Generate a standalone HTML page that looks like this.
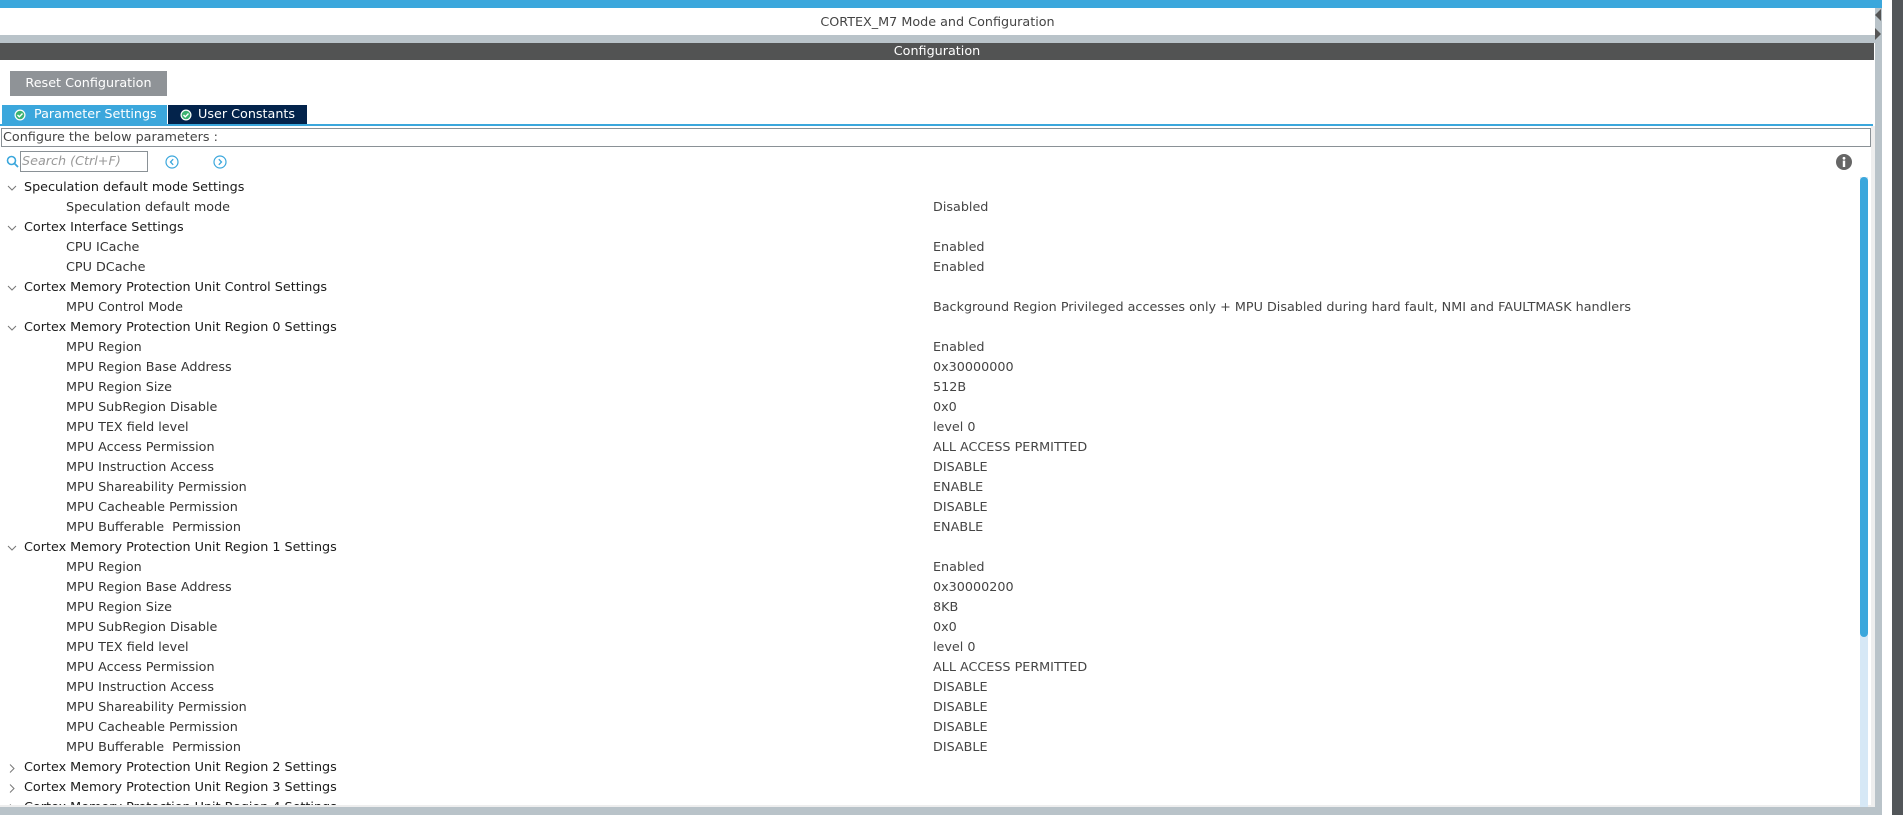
<!DOCTYPE html>
<html><head><meta charset="utf-8"><style>
*{margin:0;padding:0;box-sizing:border-box}
body{width:1903px;height:815px;overflow:hidden;background:#fff;font-family:"DejaVu Sans","Liberation Sans",sans-serif;font-size:12.75px;color:#222;position:relative}
.a{position:absolute}
.row{position:absolute;left:0;height:20px;line-height:20px;white-space:nowrap}
.h{left:24px;color:#1a1a1a}
.c{left:66px;color:#333}
.v{left:933px;color:#444}
</style></head><body>
<div class="a" style="left:0;top:0;width:1882px;height:8px;background:#3ba7dc"></div>
<div class="a" style="left:0;top:9px;width:1875px;height:27px;text-align:center;line-height:28px;color:#444">CORTEX_M7 Mode and Configuration</div>
<div class="a" style="left:0;top:35px;width:1882px;height:8px;background:#b9c3c9"></div>
<div class="a" style="left:0;top:43px;width:1874px;height:17px;background:#525353;color:#fff;text-align:center;line-height:18px">Configuration</div>
<div class="a" style="left:1875px;top:8px;width:7px;height:807px;background:#b9c3c9"></div>
<svg class="a" style="left:1874px;top:8px" width="8" height="32"><polygon points="7,1 1,7 7,13" fill="#555"/><polygon points="1,20 7,26 1,32" fill="#555"/></svg>
<div class="a" style="left:1892px;top:0;width:11px;height:815px;background:#525659"></div>
<div class="a" style="left:0;top:807px;width:1875px;height:8px;background:#b9c3c9"></div>
<div class="a" style="left:0;top:805px;width:1872px;height:2px;background:#eee"></div>
<div class="a" style="left:1871px;top:126px;width:4px;height:681px;background:#eee"></div>

<div class="a" style="left:10px;top:71px;width:157px;height:25px;background:#8f9397;color:#fff;text-align:center;line-height:26px">Reset Configuration</div>
<div class="a" style="left:2px;top:105px;width:165px;height:19px;background:#3ba7dc;color:#fff;line-height:20px;padding-left:32px">Parameter Settings</div>
<div class="a" style="left:168px;top:105px;width:139px;height:19px;background:#03234b;color:#fff;line-height:20px;padding-left:30px">User Constants</div>
<svg class="a" style="left:14px;top:109px" width="12" height="12"><circle cx="6" cy="6" r="5.5" fill="#fff"/><circle cx="6" cy="6" r="4.3" fill="#3cb371"/><path d="M3.5 6l1.8 1.8 3.2-3.3" stroke="#fff" stroke-width="1.4" fill="none"/></svg>
<svg class="a" style="left:180px;top:109px" width="12" height="12"><circle cx="6" cy="6" r="5.5" fill="#fff"/><circle cx="6" cy="6" r="4.3" fill="#3cb371"/><path d="M3.5 6l1.8 1.8 3.2-3.3" stroke="#fff" stroke-width="1.4" fill="none"/></svg>
<div class="a" style="left:0;top:124px;width:1873px;height:2px;background:#3ba7dc"></div>
<div class="a" style="left:1px;top:128px;width:1870px;height:19px;border:1px solid #8a9196;line-height:18px;color:#444;padding-left:1px">Configure the below parameters :</div>
<svg class="a" style="left:6px;top:155px" width="13" height="13"><circle cx="5.5" cy="5.5" r="4" stroke="#3ba7dc" stroke-width="1.6" fill="none"/><path d="M8.5 8.5l3.5 3.5" stroke="#3ba7dc" stroke-width="1.8"/></svg>
<div class="a" style="left:20px;top:151px;width:128px;height:21px;border:1px solid #8a9196;color:#999;font-style:italic;line-height:20px;padding-left:1px">Search (Ctrl+F)</div>
<svg class="a" style="left:165px;top:155px" width="14" height="14"><circle cx="7" cy="7" r="6" stroke="#3ba7dc" stroke-width="1.2" fill="none"/><path d="M8.2 4.2L5.5 7l2.7 2.8" stroke="#3ba7dc" stroke-width="1.3" fill="none"/></svg>
<svg class="a" style="left:213px;top:155px" width="14" height="14"><circle cx="7" cy="7" r="6" stroke="#3ba7dc" stroke-width="1.2" fill="none"/><path d="M5.8 4.2L8.5 7l-2.7 2.8" stroke="#3ba7dc" stroke-width="1.3" fill="none"/></svg>
<svg class="a" style="left:1836px;top:154px" width="16" height="16"><circle cx="8" cy="8" r="8" fill="#666"/><circle cx="8" cy="4.3" r="1.4" fill="#fff"/><rect x="6.8" y="6.6" width="2.4" height="6.4" fill="#fff"/></svg>
<div class="a" style="left:1860px;top:177px;width:8px;height:630px;background:#d6e8f6"></div>
<div class="a" style="left:1860px;top:177px;width:8px;height:460px;background:#3ba7dc;border-radius:4px"></div>

<div class="a" style="left:0;top:178px;width:1858px;height:627px;overflow:hidden">
<div id="t" style="position:relative"></div>
</div>
<script>
var d=[["h","Speculation default mode Settings",1],["c","Speculation default mode","Disabled"],["h","Cortex Interface Settings",1],["c","CPU ICache","Enabled"],["c","CPU DCache","Enabled"],["h","Cortex Memory Protection Unit Control Settings",1],["c","MPU Control Mode","Background Region Privileged accesses only + MPU Disabled during hard fault, NMI and FAULTMASK handlers"],["h","Cortex Memory Protection Unit Region 0 Settings",1],["c","MPU Region","Enabled"],["c","MPU Region Base Address","0x30000000"],["c","MPU Region Size","512B"],["c","MPU SubRegion Disable","0x0"],["c","MPU TEX field level","level 0"],["c","MPU Access Permission","ALL ACCESS PERMITTED"],["c","MPU Instruction Access","DISABLE"],["c","MPU Shareability Permission","ENABLE"],["c","MPU Cacheable Permission","DISABLE"],["c","MPU Bufferable&nbsp; Permission","ENABLE"],["h","Cortex Memory Protection Unit Region 1 Settings",1],["c","MPU Region","Enabled"],["c","MPU Region Base Address","0x30000200"],["c","MPU Region Size","8KB"],["c","MPU SubRegion Disable","0x0"],["c","MPU TEX field level","level 0"],["c","MPU Access Permission","ALL ACCESS PERMITTED"],["c","MPU Instruction Access","DISABLE"],["c","MPU Shareability Permission","DISABLE"],["c","MPU Cacheable Permission","DISABLE"],["c","MPU Bufferable&nbsp; Permission","DISABLE"],["h","Cortex Memory Protection Unit Region 2 Settings",0],["h","Cortex Memory Protection Unit Region 3 Settings",0],["h","Cortex Memory Protection Unit Region 4 Settings",0]];
var s="";d.forEach(function(r,i){var y=i*20;if(r[0]=="h"){s+='<svg class="a" style="left:7px;top:'+(y+6)+'px" width="10" height="9">'+(r[2]?'<path d="M1 2l4 4 4-4" stroke="#777" fill="none"/>':'<path d="M3 0.5l4 4-4 4" stroke="#777" fill="none"/>')+'</svg><div class="row h" style="top:'+y+'px">'+r[1]+'</div>';}else{s+='<div class="row c" style="top:'+y+'px">'+r[1]+'</div><div class="row v" style="top:'+y+'px">'+r[2]+'</div>';}});
document.getElementById("t").innerHTML=s;
</script>
</body></html>
